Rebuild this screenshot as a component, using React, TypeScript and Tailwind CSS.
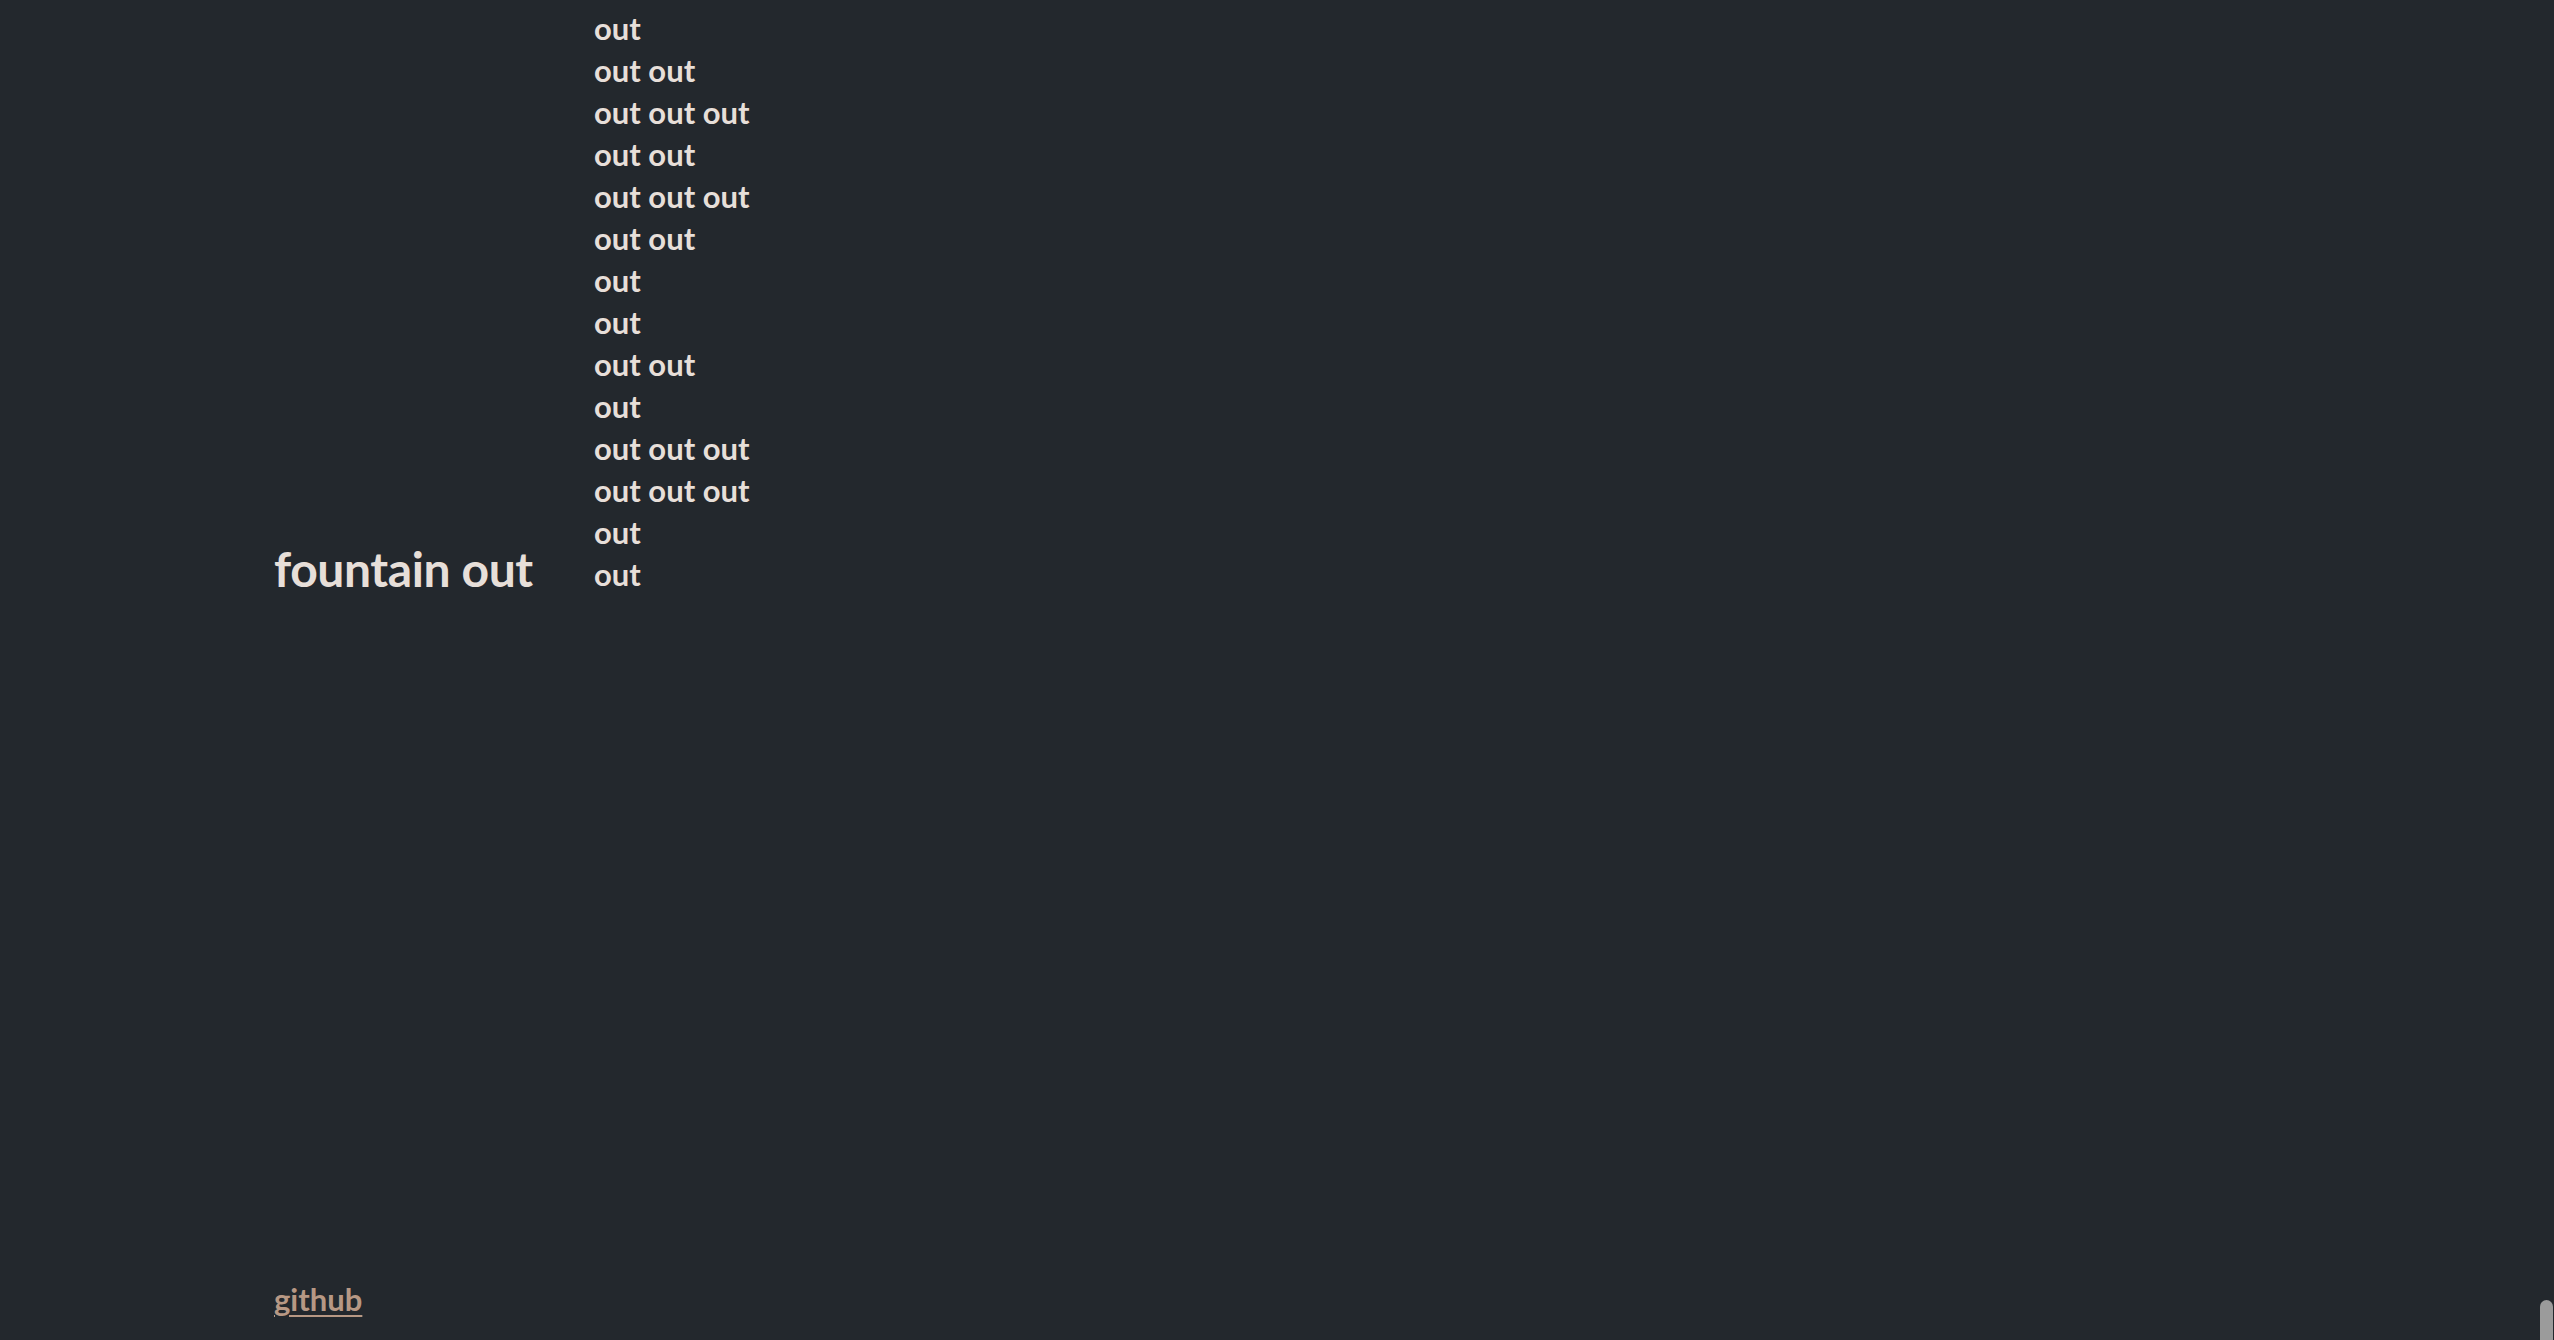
import React from "react";

const lines = [
  "out",
  "out out",
  "out out out",
  "out out",
  "out out out",
  "out out",
  "out",
  "out",
  "out out",
  "out",
  "out out out",
  "out out out",
  "out",
  "out",
];

export default function App() {
  return (
    <div
      className="min-h-screen bg-[#23282d] flex flex-col justify-between pl-[274px] pb-[20px] overflow-hidden"
      style={{ fontFamily: "Lato, 'Open Sans', sans-serif" }}
    >
      <div className="flex items-end">
        <h1 className="text-[48px] leading-none font-bold text-[#e7dfd9] mb-[2px] w-[320px] shrink-0 tracking-[-0.4px]">
          fountain out
        </h1>
        <div className="flex flex-col pt-[7px]">
          {lines.map((l, i) => (
            <div key={i} className="text-[31px] leading-[42px] font-bold text-[#e7dfd9] whitespace-pre">
              {l}
            </div>
          ))}
        </div>
      </div>
      <div>
        <a href="#" className="text-[31px] leading-[42px] font-bold text-[#b79884] underline underline-offset-[4px] decoration-[2px]">
          github
        </a>
      </div>
      <div className="fixed right-[1px] bottom-0 w-[13px] h-[40px] rounded-t-full bg-[#9b9b9b]" />
    </div>
  );
}
